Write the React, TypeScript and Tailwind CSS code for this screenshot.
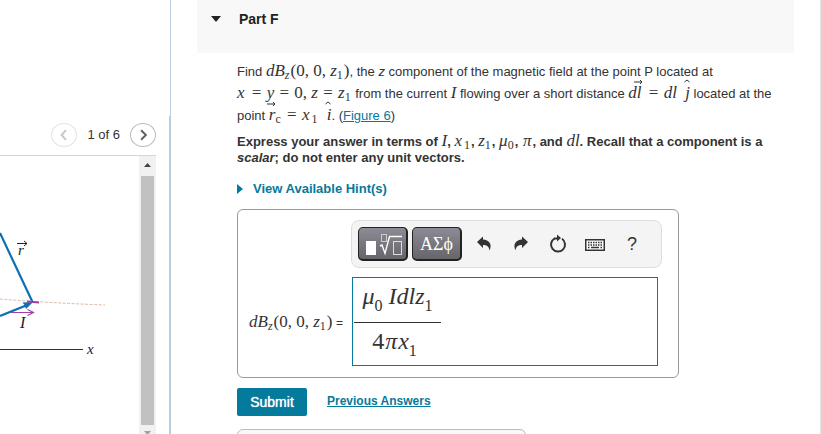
import type { ReactNode } from "react";

export default function App() {
  return (
    <div className="flex h-screen overflow-hidden bg-white font-['Liberation_Sans',Arial,sans-serif] text-[13px] text-[#333]">
      <FigurePanel />
      <div className="flex w-[15px] shrink-0 flex-col items-end">
        <div className="h-[116px] w-px bg-[#c0cfe0]" />
        <div className="w-0.5 grow bg-[#b9cde0]" />
      </div>
      <main className="min-w-0 grow border-r border-[#e4e4e4] pr-[26px] pl-[26px]">
        <PartHeader />
        <div className="pr-4 pl-10">
          <Question />
          <AnswerBox />

          {/* Actions */}
          <div className="mt-2.5 flex items-center gap-5">
            <button className="h-7 w-[70px] rounded-xs bg-[#047a9c] text-sm text-white [text-shadow:0_0_1px_#fff]">
              Submit
            </button>
            <a href="#" className="pb-0.5 text-xs font-bold text-[#047a9c] underline">
              Previous Answers
            </a>
          </div>

          <div className="mt-[13px] h-10 w-[289px] rounded-t-md border border-[#bbb] bg-[#f8f8f8]" />
        </div>
      </main>
    </div>
  );
}

function FigurePanel() {
  return (
    <aside className="flex w-[156px] shrink-0 flex-col">
      {/* Pager */}
      <div className="flex h-[156px] shrink-0 items-end justify-end gap-2.5 border-b border-[#d6d6d6] pb-2">
        <PagerButton label="Previous figure" disabled>
          <path d="M14.5 7 L10 12 L14.5 17" />
        </PagerButton>
        <span className="leading-6">1 of 6</span>
        <PagerButton label="Next figure">
          <path d="M10.5 7 L15.5 12 L10.5 17" />
        </PagerButton>
      </div>

      <div className="flex min-h-0 grow">
        <div className="min-w-0 grow overflow-hidden">
          <FieldDiagram />
        </div>
        {/* Scrollbar */}
        <div className="flex w-[17px] flex-col items-center bg-[#f1f1f1]">
          <svg className="h-5 w-[17px] shrink-0" viewBox="0 0 17 20">
            <path d="M5 11 L8.5 7 L12 11 Z" fill="#444" />
          </svg>
          <div className="w-[13px] grow bg-[#c1c1c1]" />
          <svg className="h-[9px] w-[17px] shrink-0" viewBox="0 0 17 9">
            <path d="M5 6 L12 6 L8.5 10 Z" fill="#a0a0a0" />
          </svg>
        </div>
      </div>
    </aside>
  );
}

function PagerButton({
  label,
  disabled = false,
  children,
}: {
  label: string;
  disabled?: boolean;
  children: ReactNode;
}) {
  return (
    <button
      aria-label={label}
      disabled={disabled}
      className={`flex h-6 w-[26px] items-center justify-center rounded-[50%] border ${
        disabled ? "border-[#e2e2e2] text-[#c7c7c7]" : "border-[#bbb] text-[#5c635e]"
      }`}
    >
      <svg
        className="size-6 shrink-0"
        viewBox="0 0 25 24"
        fill="none"
        stroke="currentColor"
        strokeWidth="2"
      >
        {children}
      </svg>
    </button>
  );
}

function FieldDiagram() {
  return (
    <svg
      className="h-[278px] w-[139px] font-['Liberation_Serif','Times_New_Roman',serif] italic"
      viewBox="0 156 139 278"
      fill="none"
    >
      <path d="M0 299 Q50 303 105 305" stroke="#dfb9a3" strokeDasharray="3 1.5" />
      <path d="M0 233 L32.5 302" stroke="#0d70b3" strokeWidth="2.2" />
      <path d="M0 316 L26 305.5" stroke="#0d70b3" strokeWidth="2.4" />
      <path d="M33 302 L22.5 302.5 L24.5 305 L26 309 Z" fill="#0d70b3" />
      <path d="M27 301.5 L39 302.5" stroke="#a0409f" strokeWidth="1.8" />
      <path d="M11 312.5 H33 M27.5 309.5 L33.5 312.5 L27.5 315.5" stroke="#a0409f" strokeWidth="1.2" />
      <path d="M0 349.5 H83" stroke="#333" />
      <path d="M17 243.5 H27 M24 241 L27 243.5 L24 246" stroke="#222" />
      <text x="18" y="255" fontSize="15" fill="#222">r</text>
      <text x="20" y="328" fontSize="16" fill="#222">I</text>
      <text x="87" y="354" fontSize="15" fill="#222">x</text>
    </svg>
  );
}

function PartHeader() {
  return (
    <header className="flex h-[53px] items-start bg-[#f8f8f8] pt-[9px] pl-3.5">
      <button className="flex items-center gap-[18px] text-sm font-bold text-[#222]">
        <svg className="h-1.5 w-2.5" viewBox="0 0 10 6">
          <path d="M0 0 H10 L5 6 Z" fill="#222" />
        </svg>
        Part F
      </button>
    </header>
  );
}

function Question() {
  return (
    <section>
      <p className="pt-2 leading-[22px]">
        Find{" "}
        <MathText>
          <i>dB</i>
          <Sub>
            <i>z</i>
          </Sub>
          (0, 0, <i>z</i>
          <Sub>1</Sub>)
        </MathText>
        , the <i>z</i> component of the magnetic field at the point P located at{" "}
        <MathText>
          <X />
          <Eq />
          <i>y</i>
          <Eq />
          0, <i>z</i>
          <Eq />
          <i>z</i>
          <Sub>1</Sub>
        </MathText>{" "}
        from the current{" "}
        <MathText>
          <i>I</i>
        </MathText>{" "}
        flowing over a short distance{" "}
        <MathText>
          <Accent kind="vec">dl</Accent>
          <span className="pl-0.5">
            <Eq />
          </span>
          <i>dl</i> <Accent kind="hat">j</Accent>
        </MathText>{" "}
        located at the point{" "}
        <MathText>
          <Accent kind="vec">r</Accent>
          <Sub>c</Sub>
          <Eq />
          <X />
          <Sub>1</Sub> <Accent kind="hat">i</Accent>
        </MathText>
        . (
        <a href="#" className="text-[#047a9c] underline">
          Figure 6
        </a>
        )
      </p>
      <p className="mt-[5px] leading-4 font-bold">
        Express your answer in terms of{" "}
        <MathText>
          <i>I</i>
        </MathText>
        ,{" "}
        <MathText>
          <X />
          <Sub>1</Sub>
        </MathText>
        ,{" "}
        <MathText>
          <i>z</i>
          <Sub>1</Sub>
        </MathText>
        ,{" "}
        <MathText>
          <i>μ</i>
          <Sub>0</Sub>
        </MathText>
        ,{" "}
        <MathText>
          <i className="px-px">π</i>
        </MathText>
        , and{" "}
        <MathText>
          <i>dl</i>
        </MathText>
        . Recall that a component is a <i>scalar</i>; do not enter any unit vectors.
      </p>
      <button className="mt-[13px] flex items-center gap-2.5 leading-5 font-bold text-[#047a9c]">
        <svg className="h-2.5 w-1.5" viewBox="0 0 6 10">
          <path d="M0 0 L6 5 L0 10 Z" fill="#047a9c" />
        </svg>
        View Available Hint(s)
      </button>
    </section>
  );
}

function AnswerBox() {
  return (
    <section className="mt-2.5 w-[442px] rounded-md border border-[#999] pt-2.5 pr-5 pb-[11px] pl-[11px]">
      {/* Toolbar */}
      <div className="mr-[-4px] ml-[102px] flex h-12 items-center rounded-lg border border-[#ddd] bg-[#f4f4f4] pl-1.5">
        <ToolButton label="Templates">
          <svg className="h-6 w-10" viewBox="0 0 40 24" fill="none" stroke="#fff">
            <rect x="3" y="9" width="10" height="14" fill="#fff" stroke="none" />
            <rect x="18.5" y="2.5" width="5" height="7" stroke="#ccc" />
            <path d="M17 14 L19 13 L22 21.5 L26.5 4.5 H39" strokeWidth="1.4" />
            <rect x="30.5" y="9.5" width="8" height="13" stroke="#ddd" />
          </svg>
        </ToolButton>
        <ToolButton label="Symbols">ΑΣϕ</ToolButton>
        <div className="flex grow items-center justify-between pr-[19px] pl-2">
          <IconButton label="Undo">
            <path d="M3 8 L9 2.5 V5.5 C15 6 18.5 10 15.5 16.5 C15 12.5 13 11 9 11 V14 Z" fill="#333" />
          </IconButton>
          <IconButton label="Redo">
            <path d="M17 8 L11 2.5 V5.5 C5 6 1.5 10 4.5 16.5 C5 12.5 7 11 11 11 V14 Z" fill="#333" />
          </IconButton>
          <IconButton label="Reset">
            <path d="M14 4.8 A7 7 0 1 1 6.5 4.5" fill="none" stroke="#333" strokeWidth="2" />
            <path d="M9 0.5 L13 4 L9 7.5 Z M6 3.5 H10 V5.5 H6 Z" fill="#333" />
          </IconButton>
          <IconButton label="Keyboard shortcuts">
            <rect x="0.75" y="5.75" width="18.5" height="10.5" fill="#fff" stroke="#333" strokeWidth="1.5" />
            <path d="M3 8.5 H17 M3 11 H17" stroke="#333" strokeWidth="1.5" strokeDasharray="1.5 1" />
            <path d="M3 13.5 H4.5 M6 13.5 H14 M15.5 13.5 H17" stroke="#333" strokeWidth="1.5" />
          </IconButton>
          <button aria-label="Help" className="w-5 text-lg leading-6">
            ?
          </button>
        </div>
      </div>

      {/* Answer */}
      <div className="mt-[9px] flex items-center">
        <label id="answer-label" className="w-[103px] shrink-0 text-xs whitespace-nowrap">
          <MathText>
            <i>dB</i>
            <Sub>
              <i>z</i>
            </Sub>
            (0, 0, <i>z</i>
            <Sub>1</Sub>)
          </MathText>{" "}
          =
        </label>
        <div
          role="textbox"
          tabIndex={0}
          aria-labelledby="answer-label"
          className="h-[89px] grow border border-[#047a9c] pl-px font-['Liberation_Serif','Times_New_Roman',serif] text-2xl"
        >
          <div className="w-[87px] text-center">
            <div className="h-[45px] border-b border-[#333] leading-9 whitespace-nowrap">
              <i>μ</i>
              <BigSub>0</BigSub>
              <i className="pl-1.5">Idlz</i>
              <BigSub>1</BigSub>
            </div>
            <div className="pr-1.5 leading-9">
              4<i className="px-px">π</i>
              <i>x</i>
              <BigSub>1</BigSub>
            </div>
          </div>
        </div>
      </div>
    </section>
  );
}

// Toolbar pieces
function ToolButton({ label, children }: { label: string; children: ReactNode }) {
  return (
    <button
      aria-label={label}
      className="mr-1 flex h-[34px] w-[50px] shrink-0 items-center justify-center rounded-[5px] border border-r-2 border-b-2 border-[#222] bg-linear-to-b from-[#8d8c96] to-[#65656a] font-['Liberation_Serif',serif] text-lg text-white"
    >
      {children}
    </button>
  );
}

function IconButton({ label, children }: { label: string; children: ReactNode }) {
  return (
    <button aria-label={label}>
      <svg className="size-5" viewBox="0 0 20 20">
        {children}
      </svg>
    </button>
  );
}

// Math typesetting
function MathText({ children }: { children: ReactNode }) {
  return (
    <span className="font-['Liberation_Serif','Times_New_Roman',serif] text-[17px] leading-none font-normal whitespace-nowrap">
      {children}
    </span>
  );
}

function X() {
  return <i className="pr-0.5">x</i>;
}

function Eq() {
  return <span className="px-px"> = </span>;
}

function Sub({ children }: { children: ReactNode }) {
  return <sub className="bottom-[-3px] pr-px text-xs leading-none">{children}</sub>;
}

function BigSub({ children }: { children: ReactNode }) {
  return <sub className="bottom-[-7px] text-base leading-none">{children}</sub>;
}

function Accent({ kind, children }: { kind: "vec" | "hat"; children: ReactNode }) {
  return (
    <span className={`relative inline-block leading-none ${kind === "hat" ? "ml-1" : ""}`}>
      <i>{children}</i>
      <svg
        className="absolute -top-1.5 right-0 h-1.5 w-2 overflow-visible"
        viewBox="0 0 8 6"
        fill="none"
        stroke="#333"
      >
        {kind === "vec" ? (
          <path d="M0 4 H8 M6 2 L8 4 L6 6" />
        ) : (
          <path d="M2.5 4 L5 2 L7.5 4" />
        )}
      </svg>
    </span>
  );
}
